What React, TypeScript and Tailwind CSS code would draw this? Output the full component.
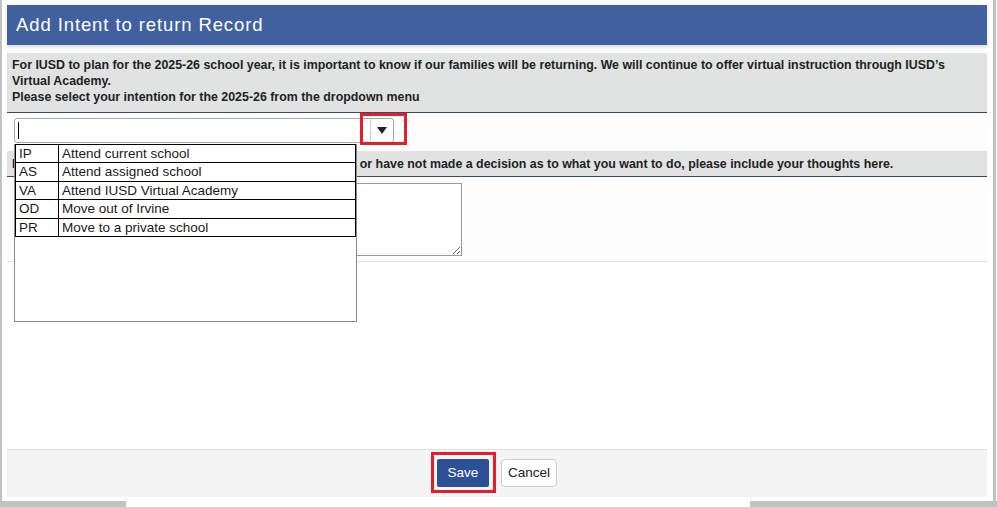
import React from "react";

const options = [
  { code: "IP", label: "Attend current school" },
  { code: "AS", label: "Attend assigned school" },
  { code: "VA", label: "Attend IUSD Virtual Academy" },
  { code: "OD", label: "Move out of Irvine" },
  { code: "PR", label: "Move to a private school" },
];

const App: React.FC = () => {
  return (
    <div className="relative w-[997px] h-[507px] bg-white font-['Liberation_Sans',Arial,sans-serif] text-[#1f1f1f] overflow-hidden">
      <div className="w-[996px] h-[501px] border-l-2 border-r-[3px] border-[#c2c2c2] pl-[5px] pt-[5px] pb-[4px]">
        <div className="w-[980px] h-full flex flex-col bg-white">
          {/* title bar */}
          <div className="h-[40px] bg-[#4060a0] shadow-[0_2px_3px_rgba(0,0,0,0.15)] flex items-center pl-[9px]">
            <h1 className="text-white text-[18.5px] tracking-[0.9px]">Add Intent to return Record</h1>
          </div>

          {/* question */}
          <div className="mt-[8px] bg-[#e1e3e2] border-b border-[#34496f] px-[5px] pt-[4px] pb-[7px] text-[12.4px] font-bold leading-[16px] text-[#222]">
            For IUSD to plan for the 2025-26 school year, it is important to know if our families will be returning. We will continue to offer virtual instruction through IUSD’s
            <br />
            Virtual Academy.
            <br />
            Please select your intention for the 2025-26 from the dropdown menu
          </div>

          <div className="bg-[#fdfdfd] px-[7px] pt-[5px] pb-[8px]">
            <div className="flex h-[25px] w-[380px] border border-[#a8a8a8] rounded-[3px] bg-white">
              <div className="flex-1 flex items-center pl-[3px]">
                <div className="w-px h-[17px] bg-black" />
              </div>
              <div className="w-[23px] border-l border-[#cfcfcf] flex items-center justify-center">
                <svg width="10" height="7" viewBox="0 0 10 7">
                  <path d="M0 0 L10 0 L5 7 Z" fill="#222" />
                </svg>
              </div>
            </div>
          </div>

          {/* comments */}
          <div className="h-[26px] bg-[#e1e3e2] border-b border-[#34496f] px-[5px] pt-[5px] text-[12.4px] font-bold leading-[16px] text-[#222] whitespace-nowrap">
            If you are unsure of your plans for the 2025-26 school year or have not made a decision as to what you want to do, please include your thoughts here.
          </div>
          <div className="bg-[#fdfdfd] px-[7px] pt-[6px] pb-[5px] border-b border-[#e2e2e2]">
            <textarea className="block w-[448px] h-[73px] border border-[#9a9a9a] bg-white resize" />
          </div>

          <div className="flex-1" />

          {/* footer */}
          <div className="h-[48px] border-t border-[#e0e0e0] bg-[#f4f4f4] flex items-center justify-center gap-[12px] pb-px">
            <button className="h-[28px] w-[52px] rounded-[2px] bg-[#2c4f96] text-white text-[13.5px]">Save</button>
            <button className="h-[28px] w-[56px] rounded-[4px] border border-[#cccccc] bg-white text-[#222] text-[13.5px]">Cancel</button>
          </div>
        </div>
      </div>
      <div className="flex h-[6px]">
        <div className="w-[126px] bg-[#c2c2c2]" />
        <div className="flex-1" />
        <div className="w-[247px] bg-[#c2c2c2]" />
      </div>

      {/* open dropdown list */}
      <div className="absolute left-[14px] top-[144px] w-[343px] h-[178px] border border-[#8a8a8a] border-t-0 bg-white">
        <div className="border-x border-t border-black">
          {options.map((o) => (
            <div key={o.code} className="flex h-[18.4px] border-b border-black text-[13.5px] leading-[17px] text-[#1a1a1a]">
              <div className="w-[43px] border-r border-black pl-[3px]">{o.code}</div>
              <div className="pl-[3px]">{o.label}</div>
            </div>
          ))}
        </div>
      </div>

      {/* highlight boxes */}
      <div className="absolute left-[360px] top-[113px] w-[47px] h-[32px] border-[3px] border-[#e3202a]" />
      <div className="absolute left-[431px] top-[452px] w-[65px] h-[41px] border-[3px] border-[#e3202a]" />
    </div>
  );
};

export default App;
